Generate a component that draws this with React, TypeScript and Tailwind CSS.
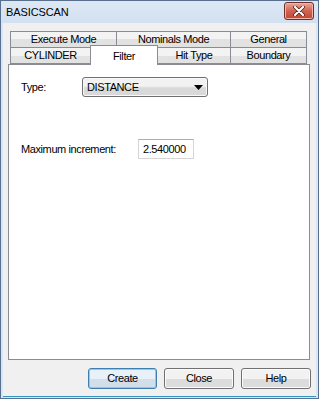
import React from "react";

const row1 = [
  { label: "Execute Mode", w: "w-[107px]" },
  { label: "Nominals Mode", w: "w-[115px]" },
  { label: "General", w: "w-[77px]" },
];

const row2 = [
  { label: "CYLINDER", w: "w-[81px]", active: false },
  { label: "Filter", w: "w-[68px]", active: true },
  { label: "Hit Type", w: "w-[74px]", active: false },
  { label: "Boundary", w: "w-[77px]", active: false },
];

function Tab({ label, w, first }: { label: string; w: string; first?: boolean }) {
  return (
    <div
      className={`${w} ${first ? "" : "-ml-px"} h-[17px] flex items-center justify-center border border-[#898c95] bg-gradient-to-b from-[#f3f3f3] from-50% to-[#e2e2e2] to-50%`}
    >
      {label}
    </div>
  );
}

function Button({ label, primary }: { label: string; primary?: boolean }) {
  return (
    <div
      className={
        primary
          ? "w-[69px] h-[21px] flex items-center justify-center rounded-[3px] border border-[#3c7fb1] bg-gradient-to-b from-[#e9f1f8] from-50% to-[#d2dfea] to-50% shadow-[inset_0_0_0_1px_#7fd0f5]"
          : "w-[70px] h-[21px] flex items-center justify-center rounded-[3px] border border-[#707070] bg-gradient-to-b from-[#f2f2f2] from-50% to-[#dcdcdc] to-50% shadow-[inset_0_0_0_1px_#fbfbfb]"
      }
    >
      {label}
    </div>
  );
}

export default function App() {
  return (
    <div
      className="w-[319px] h-[399px] flex flex-col border border-[#58708d] bg-[#d9e5f2] text-[11px] tracking-[-0.4px] text-black"
      style={{ fontFamily: '"Liberation Sans", Arial, sans-serif' }}
    >
      {/* title bar */}
      <div className="h-[23px] flex items-center justify-between pl-[5px] pr-[4px] bg-gradient-to-b from-[#dde8f5] to-[#d2e0f0]">
        <span className="text-[11px] tracking-[-0.1px] pt-[1px]">BASICSCAN</span>
        <div className="w-[30px] h-[18px] -mt-[2px] flex items-center justify-center rounded-[3px] border border-[#6b2f2c] bg-gradient-to-b from-[#e9a99c] via-[#d1614f] to-[#c24734] shadow-[inset_0_0_0_1px_#f0b4a8]">
          <svg width="12" height="10" viewBox="0 0 12 10">
            <path d="M2 1 L10 9 M10 1 L2 9" stroke="#4a1a14" strokeWidth="3.6" strokeLinecap="round" />
            <path d="M2 1 L10 9 M10 1 L2 9" stroke="#ffffff" strokeWidth="2.2" strokeLinecap="round" />
          </svg>
        </div>
      </div>

      {/* client area */}
      <div className="flex-1 mx-[2px] mb-[1px] flex flex-col bg-[#f0f0f0] pt-[8px] pl-[5px] pr-[5px] pb-[7px] border-b border-[#2f93c4]">
        <div className="pl-[2px] pr-[2px]">
          <div className="flex">
            {row1.map((t, i) => (
              <Tab key={t.label} label={t.label} w={t.w} first={i === 0} />
            ))}
          </div>
          <div className="flex -mt-px h-[17px] items-start">
            {row2.map((t, i) =>
              t.active ? (
                <div
                  key={t.label}
                  className={`${t.w} -ml-px relative z-10 -mt-[2px] h-[20px] flex items-start justify-center pt-[2px] border border-b-0 border-[#898c95] bg-white`}
                >
                  {t.label}
                </div>
              ) : (
                <Tab key={t.label} label={t.label} w={t.w} first={i === 0} />
              )
            )}
          </div>
        </div>

        {/* panel */}
        <div className="w-[302px] h-[296px] border border-[#898c95] bg-white pt-[12px] pl-[12px]">
          <div className="flex items-center h-[20px]">
            <span className="w-[61px]">Type:</span>
            <div className="w-[126px] h-[20px] flex items-center justify-between pl-[4px] pr-[4px] rounded-[3px] border border-[#707070] bg-gradient-to-b from-[#f2f2f2] from-45% to-[#d9d9d9] to-55% shadow-[inset_0_0_0_1px_#f8f8f8]">
              <span>DISTANCE</span>
              <svg width="9" height="5" viewBox="0 0 9 5">
                <path d="M0 0 L9 0 L4.5 5 Z" fill="#000" />
              </svg>
            </div>
          </div>
          <div className="flex items-center h-[20px] mt-[42px]">
            <span className="w-[117px]">Maximum increment:</span>
            <div className="w-[56px] h-[20px] flex items-center pl-[4px] border border-[#d5d5d5] border-t-[#abadb3] bg-white">
              2.540000
            </div>
          </div>
        </div>

        {/* buttons */}
        <div className="mt-[8px] flex justify-end gap-[7px]">
          <Button label="Create" primary />
          <Button label="Close" />
          <Button label="Help" />
        </div>
      </div>
    </div>
  );
}
